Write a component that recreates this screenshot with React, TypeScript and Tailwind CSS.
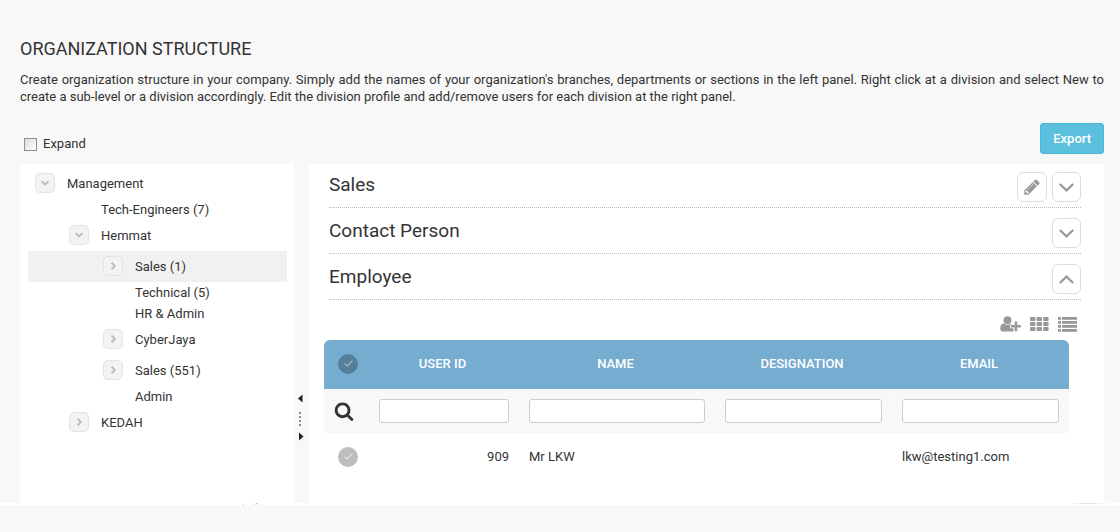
import { useState } from 'react';

interface TreeNode {
    label: string;
    level: number;
    state: 'open' | 'closed' | 'leaf';
}

const nodes: TreeNode[] = [
    { label: 'Management', level: 0, state: 'open' },
    { label: 'Tech-Engineers (7)', level: 1, state: 'leaf' },
    { label: 'Hemmat', level: 1, state: 'open' },
    { label: 'Sales (1)', level: 2, state: 'closed' },
    { label: 'Technical (5)', level: 2, state: 'leaf' },
    { label: 'HR & Admin', level: 2, state: 'leaf' },
    { label: 'CyberJaya', level: 2, state: 'closed' },
    { label: 'Sales (551)', level: 2, state: 'closed' },
    { label: 'Admin', level: 2, state: 'leaf' },
    { label: 'KEDAH', level: 1, state: 'closed' },
];

const indents = ['pl-[7px]', 'pl-[41px]', 'pl-[75px]'];

const columns = ['User ID', 'Name', 'Designation', 'Email'];

function Chevron({ up = false }: { up?: boolean }) {
    return (
        <svg width="15" height="9" viewBox="0 0 15 9" fill="none" stroke="#999" strokeWidth="2.2">
            <path d={up ? 'M.8 8 7.5 1.6 14.2 8' : 'M.8 1 7.5 7.4 14.2 1'} />
        </svg>
    );
}

function TreeArrow({ open }: { open: boolean }) {
    return (
        <svg width="8" height="8" viewBox="0 0 8 8" fill="none" stroke="#bdbdc0" strokeWidth="2">
            <path d={open ? 'M.6 2.2 4 5.4 7.4 2.2' : 'M2.6 .6 5.8 4 2.6 7.4'} />
        </svg>
    );
}

function PencilIcon() {
    return (
        <svg width="18" height="18" viewBox="0 0 1792 1792" fill="#999">
            <path d="M491 1536l91-91-235-235-91 91v107h128v128h107zm523-928q0-22-22-22-10 0-17 7l-542 542q-7 7-7 17 0 22 22 22 10 0 17-7l542-542q7-7 7-17zm-54-192l416 416-832 832h-416v-416zm683 96q0 53-37 90l-166 166-416-416 166-165q36-38 90-38 53 0 91 38l235 234q37 39 37 91z" />
        </svg>
    );
}

function SearchIcon() {
    return (
        <svg width="20" height="20" viewBox="0 0 1792 1792" fill="#333">
            <path d="M1216 832q0-185-131.5-316.5t-316.5-131.5-316.5 131.5-131.5 316.5 131.5 316.5 316.5 131.5 316.5-131.5 131.5-316.5zm512 832q0 52-38 90t-90 38q-54 0-90-38l-343-342q-179 124-399 124-143 0-273.5-55.5t-225-150-150-225-55.5-273.5 55.5-273.5 150-225 225-150 273.5-55.5 273.5 55.5 225 150 150 225 55.5 273.5q0 220-124 399l343 343q37 37 37 90z" />
        </svg>
    );
}

function UserPlusIcon() {
    return (
        <svg width="21" height="16" viewBox="0 0 21 16" fill="#999">
            <circle cx="7.5" cy="4.2" r="4" />
            <path d="M3.6 7.2Q7.5 10.6 11 7.4V8.8H10.2V12.2H13.4V15.4H2.4Q.2 15.4 .2 12.8 .2 8 3.6 7.2Z" />
            <path d="M14.6 5.4h2.6v3.6h3.6v2.6h-3.6v3.6h-2.6v-3.6h-3.6v-2.600h3.600z" />
        </svg>
    );
}

function GridIcon() {
    return (
        <svg width="19" height="14" viewBox="0 0 19 14" fill="#999">
            {[0, 5, 10].map((y) => [0, 6.600, 13.200].map((x) => (
                <rect key={`${x}-${y}`} x={x} y={y} width="5.4" height="4" rx=".8" />
            )))}
        </svg>
    );
}

function ListIcon() {
    return (
        <svg width="19" height="15" viewBox="0 0 19 15" fill="#999">
            {[0, 4, 8, 12].map((y) => (
                <g key={y}>
                    <rect x="0" y={y} width="3" height="2.8" />
                    <rect x="4" y={y} width="15" height="2.8" />
                </g>
            ))}
        </svg>
    );
}

function CheckButton({ label, dark = false }: { label: string; dark?: boolean }) {
    return (
        <button aria-label={label} className={`flex size-5 items-center justify-center rounded-full ${dark ? 'bg-[#587f9a]' : 'bg-[#bdbdbd]'}`}>
            <svg width="9" height="7" viewBox="0 0 9 7" fill="none" stroke={dark ? '#a5bccb' : '#e6e6e6'} strokeWidth="1.2">
                <path d="M.6 3.6 3.2 6 8.4 .8" />
            </svg>
        </button>
    );
}

const squareButton = 'flex h-[30px] items-center justify-center rounded-md border border-[#ddd] bg-white';

interface SectionProps {
    title: string;
    editable?: boolean;
    expanded?: boolean;
}

function Section({ title, editable, expanded }: SectionProps) {
    return (
        <div className="flex items-start justify-between border-b border-dotted border-[#bbb] pt-[10px] pb-[5px] first:pt-2">
            <h2 className="text-[19px] leading-[26px]">{title}</h2>
            <div className="flex gap-[5px]">
                {editable && (
                    <button aria-label={`Edit ${title}`} className={`${squareButton} w-[30px]`}>
                        <PencilIcon />
                    </button>
                )}
                <button aria-label={`Toggle ${title}`} aria-expanded={!!expanded} className={`${squareButton} w-[29px]`}>
                    <Chevron up={expanded} />
                </button>
            </div>
        </div>
    );
}

function Tree() {
    const [selected, setSelected] = useState(3);

    return (
        <ul className="pt-1 pr-[7px] pl-2">
            {nodes.map((node, index) => (
                <li
                    key={index}
                    onClick={() => setSelected(index)}
                    className={`flex items-center ${indents[node.level]} ${node.state === 'leaf' ? 'h-[21px]' : 'h-[31px]'} ${index === selected ? 'bg-[#f1f1f1]' : ''}`}
                >
                    {node.state === 'leaf' ? (
                        <span className="w-5" />
                    ) : (
                        <button aria-label={`Toggle ${node.label}`} className="mt-[5px] flex size-5 items-center justify-center self-start rounded-[5px] border border-[#e3e3e3] bg-[#f3f3f3]">
                            <TreeArrow open={node.state === 'open'} />
                        </button>
                    )}
                    <span className="ml-3">{node.label}</span>
                </li>
            ))}
        </ul>
    );
}

function Splitter() {
    return (
        <div className="flex w-[15px] shrink-0 flex-col items-center pt-[230px]">
            <svg width="7" height="47" viewBox="0 0 7 47" fill="#222">
                <path d="M0 4.500 4.500 .5v8zM1 38.500v8L5.500 42.500z" />
                {[18, 22, 26, 30].map((y) => (
                    <rect key={y} x="1" y={y} width="2" height="2" fill="#888" />
                ))}
            </svg>
        </div>
    );
}

function EmployeeTable() {
    return (
        <table className="w-full table-fixed">
            <colgroup>
                <col className="w-[45px]" />
                <col className="w-[150px]" />
                <col className="w-[196px]" />
                <col />
                <col />
            </colgroup>
            <thead>
                <tr className="h-[49px] bg-[#75acd0] text-white uppercase">
                    <th className="rounded-tl-md pb-[2px] pl-[14px]">
                        <CheckButton label="Select all" dark />
                    </th>
                    {columns.map((column) => (
                        <th key={column} className="pr-[13px] pb-[2px] pl-[10px] font-medium last:rounded-tr-md">{column}</th>
                    ))}
                </tr>
            </thead>
            <tbody>
                <tr className="h-11 bg-[#f8f8f8]">
                    <td className="pl-[10px]">
                        <button aria-label="Search" className="block">
                            <SearchIcon />
                        </button>
                    </td>
                    {columns.map((column) => (
                        <td key={column} className="px-[10px]">
                            <input aria-label={column} type="text" className="block h-6 w-full rounded-[3px] border border-[#ccc] bg-white px-1.5" />
                        </td>
                    ))}
                </tr>
                <tr className="h-[47px]">
                    <td className="pl-[14px]">
                        <CheckButton label="Select Mr LKW" />
                    </td>
                    <td className="px-[10px] text-right">909</td>
                    <td className="px-[10px]">Mr LKW</td>
                    <td />
                    <td className="px-[10px]">lkw@testing1.com</td>
                </tr>
            </tbody>
        </table>
    );
}

export default function App() {
    return (
        <div className="min-h-screen bg-[#f8f8f8] font-[Roboto,sans-serif] text-[13px] leading-[17px] text-[#333]">
            <header className="pt-[36px] pr-4 pl-5">
                <h1 className="text-[18px] leading-[26px] uppercase">Organization Structure</h1>
                <p className="mt-[9px] text-justify">
                    Create organization structure in your company. Simply add the names of your organization's branches, departments or sections in the left panel. Right click at a division and select New to create a sub-level or a division accordingly. Edit the division profile and add/remove users for each division at the right panel.
                </p>
                <div className="mt-[18px] flex items-end justify-between">
                    <label className="flex items-center gap-[6px] pb-[2px] pl-1">
                        <input type="checkbox" className="mt-[2px] size-[13px] appearance-none border border-[#8f8f8f] bg-gradient-to-br from-[#ddd] to-white" />
                        Expand
                    </label>
                    <button className="h-[31px] rounded-[3px] border border-[#46b8da] bg-[#5bc0de] px-3 font-medium text-white">Export</button>
                </div>
            </header>

            <main className="mt-[10px] flex pr-4 pl-5">
                <section className="min-h-[339px] w-[274px] shrink-0 bg-white">
                    <Tree />
                </section>
                <Splitter />
                <section className="min-w-0 flex-1 bg-white">
                    <div className="pr-[23px] pl-5">
                        <Section title="Sales" editable />
                        <Section title="Contact Person" />
                        <Section title="Employee" expanded />
                    </div>
                    <div className="flex h-10 items-center justify-end gap-[9px] pt-[9px] pr-[27px] pb-[1px]">
                        <button aria-label="Add user"><UserPlusIcon /></button>
                        <button aria-label="Grid view"><GridIcon /></button>
                        <button aria-label="List view"><ListIcon /></button>
                    </div>
                    <div className="pr-[35px] pl-[15px]">
                        <EmployeeTable />
                    </div>
                </section>
            </main>
            <div className="flex h-[2px] justify-between bg-white pr-[3px] pl-[240px]">
                <svg width="20" height="2" viewBox="0 0 20 2">
                    <path d="M2 1h2v1h-2z" fill="#e4e3c8" />
                    <path d="M15 2 16 0h2l-1 1z" fill="#b4bcc2" />
                </svg>
                <svg width="48" height="2" viewBox="0 0 48 2">
                    <path d="M0 0h38L20 1z" fill="#dcdcdc" />
                </svg>
            </div>
        </div>
    );
}
